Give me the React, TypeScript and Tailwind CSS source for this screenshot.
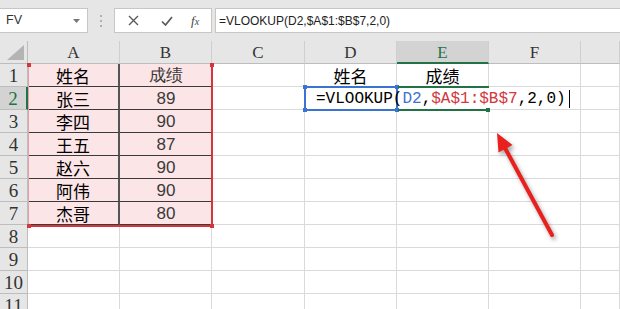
const COLS = ['A', 'B', 'C', 'D', 'E', 'F', ''];

const DATA: Record<number, string[]> = {
  1: ['姓名', '成绩'],
  2: ['张三', '89'],
  3: ['李四', '90'],
  4: ['王五', '87'],
  5: ['赵六', '90'],
  6: ['阿伟', '90'],
  7: ['杰哥', '80'],
};

const ROWS = [1, 2, 3, 4, 5, 6, 7, 8, 9, 10, 11];

const cjk = "font-['Noto_Sans_CJK_SC',sans-serif]";
const serif = "font-['Liberation_Serif',serif]";

export default function App() {
  return (
    <div className="relative h-[309px] w-[620px] overflow-hidden bg-white">
      <FormulaBar />

      <div className="grid grid-cols-[28px_92px_92px_93px_92px_92px_92px_1fr] grid-rows-[23px_repeat(11,23px)]">
        <div className="flex items-end justify-end border-r border-b border-[#bdbdbd] bg-[#e6e6e6] pr-[3px] pb-[3px]">
          <svg width="17" height="15" viewBox="0 0 17 15">
            <polygon points="17,0 17,15 0,15" fill="#b4b4b4" />
          </svg>
        </div>
        {COLS.map((c, i) => (
          <div
            key={i}
            className={
              c === 'E'
                ? `flex items-center justify-center border-r border-b-2 border-r-[#cfcfcf] border-b-[#217346] bg-[#d3d3d3] pt-[2px] text-[17px] text-[#217346] ${serif}`
                : `flex items-center justify-center border-r border-b border-r-[#cfcfcf] border-b-[#bdbdbd] bg-[#e6e6e6] pt-[2px] text-[17px] text-[#333] ${serif}`
            }
          >
            {c}
          </div>
        ))}

        {ROWS.map((r) => (
          <Row key={r} r={r} />
        ))}
      </div>

      {/* range A1:B7 highlight */}
      <div className="absolute top-[63px] left-[28px] h-[164px] w-[185px] border-t border-l border-r-2 border-b-2 border-t-transparent border-l-[#e2a2a6] border-r-[#d3363c] border-b-[#d3363c]">
        <span className="absolute -top-[1px] -left-[2px] h-[4px] w-[4px] bg-[#d3363c]" />
        <span className="absolute -top-[1px] -right-[3px] h-[4px] w-[4px] bg-[#d3363c]" />
        <span className="absolute -bottom-[3px] -left-[2px] h-[4px] w-[4px] bg-[#d3363c]" />
        <span className="absolute -right-[3px] -bottom-[3px] h-[4px] w-[4px] bg-[#d3363c]" />
      </div>

      {/* D2 reference */}
      <div className="absolute top-[86px] left-[304px] h-[25px] w-[94px] border-2 border-[#3b73d3]">
        <span className="absolute -top-[3px] -left-[3px] h-[4px] w-[4px] bg-[#3b73d3]" />
        <span className="absolute -top-[3px] -right-[3px] h-[4px] w-[4px] bg-[#3b73d3]" />
        <span className="absolute -bottom-[3px] -left-[3px] h-[4px] w-[4px] bg-[#3b73d3]" />
        <span className="absolute -right-[3px] -bottom-[3px] h-[4px] w-[4px] bg-[#3b73d3]" />
      </div>

      {/* active cell E2 */}
      <div className="absolute top-[86px] left-[398px] h-[2px] w-[91px] bg-[#217346]" />
      <div className="absolute top-[109px] left-[398px] h-[2px] w-[91px] bg-[#217346]" />
      <span className="absolute top-[108px] left-[486px] h-[4px] w-[4px] bg-[#217346]" />

      {/* in-cell edit text */}
      <div className="absolute top-[88px] left-[316px] flex h-[22px] items-center font-['Liberation_Mono',monospace] text-[16px] whitespace-pre text-black">
        <span>=VLOOKUP(</span>
        <span className="text-[#3b73d3]">D2</span>
        <span>,</span>
        <span className="text-[#d3363c]">$A$1:$B$7</span>
        <span>,2,0)</span>
        <span className="ml-[3px] h-[18px] w-[1px] bg-black" />
      </div>

      <Arrow />
    </div>
  );
}

function Row({ r }: { r: number }) {
  const data = DATA[r];
  const active = r === 2;
  return (
    <>
      <div
        className={
          active
            ? `flex items-center justify-center border-r-2 border-b border-r-[#217346] border-b-[#bdbdbd] bg-[#d3d3d3] pt-[1px] text-[19px] leading-none text-[#217346] ${serif}`
            : `flex items-center justify-center border-r border-b border-r-[#bdbdbd] border-b-[#bdbdbd] bg-[#e6e6e6] pt-[1px] text-[19px] leading-none text-[#333] ${serif}`
        }
      >
        {r}
      </div>
      {COLS.map((c, i) => {
        if (data && i < 2) {
          return (
            <div
              key={c}
              className={
                i === 0
                  ? `flex items-center justify-center border-r-2 border-b border-r-[#555] border-b-[#3a3a3a] bg-[#fce5e7] pt-[1px] text-[17px] leading-none text-black ${cjk}`
                  : `flex items-center justify-center border-b border-b-[#3a3a3a] bg-[#fce5e7] pt-[1px] font-['Liberation_Sans',sans-serif] text-[17px] leading-none text-[#3a3a3a]`
              }
            >
              {data[i]}
            </div>
          );
        }
        let text = '';
        if (r === 1 && c === 'D') text = '姓名';
        if (r === 1 && c === 'E') text = '成绩';
        const noRight = r === 2 && (c === 'E' || c === 'D');
        return (
          <div
            key={c || 'G'}
            className={`flex items-center justify-center border-b border-[#dadada] ${noRight ? '' : 'border-r'} pt-[1px] text-[17px] leading-none text-black ${cjk}`}
          >
            {text}
          </div>
        );
      })}
    </>
  );
}

function FormulaBar() {
  return (
    <div className="flex h-[41px] items-start gap-0 bg-[#e6e6e6] pt-[8px]">
      <div className="-ml-[1px] flex h-[25px] w-[89px] items-center justify-between border border-[#c6c6c6] bg-white pr-[7px] pl-[6px] font-['Liberation_Sans',sans-serif] text-[12.5px] text-[#333]">
        <span>FV</span>
        <svg width="7" height="4" viewBox="0 0 7 4">
          <polygon points="0,0 7,0 3.5,4" fill="#777" />
        </svg>
      </div>
      <div className="flex h-[25px] w-[26px] flex-col items-center justify-center gap-[3px]">
        <span className="h-[2px] w-[2px] bg-[#b0b0b0]" />
        <span className="h-[2px] w-[2px] bg-[#b0b0b0]" />
        <span className="h-[2px] w-[2px] bg-[#b0b0b0]" />
      </div>
      <div className="flex h-[25px] w-[98px] items-center border border-[#c6c6c6] bg-white pl-[13px]">
        <svg width="11" height="11" viewBox="0 0 11 11">
          <path d="M1 1L10 10M10 1L1 10" stroke="#5a5a5a" strokeWidth="1.4" />
        </svg>
        <svg className="ml-[22px]" width="12" height="10" viewBox="0 0 12 10">
          <path d="M1 5.5L4.5 9L11 1" stroke="#5a5a5a" strokeWidth="1.7" fill="none" />
        </svg>
        <span className="ml-[18px] font-['Liberation_Serif',serif] text-[13px] text-[#444] italic">
          f<span className="text-[10px]">x</span>
        </span>
      </div>
      <div className="ml-[3px] flex h-[25px] flex-1 items-center border border-r-0 border-[#c6c6c6] bg-white pl-[3px] font-['Liberation_Sans',sans-serif] text-[12px] text-[#222]">
        =VLOOKUP(D2,$A$1:$B$7,2,0)
      </div>
    </div>
  );
}

function Arrow() {
  return (
    <svg
      className="pointer-events-none absolute top-0 left-0 drop-shadow-[2px_3px_2px_rgba(0,0,0,0.35)]"
      width="620"
      height="309"
      viewBox="0 0 620 309"
    >
      <line x1="552" y1="235" x2="505" y2="148" stroke="#e8211e" strokeWidth="4" strokeLinecap="round" />
      <polygon points="497,133 512.5,145 498.5,152.5" fill="#e8211e" />
    </svg>
  );
}
